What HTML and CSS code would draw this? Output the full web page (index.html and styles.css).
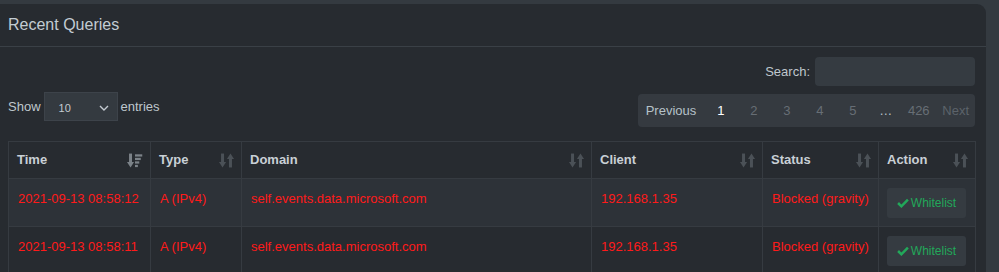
FILE: index.html
```html
<!DOCTYPE html>
<html lang="en">

<head>
    <meta charset="UTF-8">
    <title>Recent Queries</title>
    <link rel="stylesheet" href="styles.css">
</head>

<body>
    <div class="page">
        <div class="card">
            <div class="card-header">
                <h3 class="card-title">Recent Queries</h3>
            </div>
            <div class="card-body">
                <div class="filter-row">
                    <label class="search">Search: <input type="text" class="search-input"></label>
                </div>
                <div class="tools-row">
                    <div class="length">
                        <span>Show</span>
                        <div class="select">
                            <span>10</span>
                            <svg class="chevron" width="10" height="6" viewBox="0 0 10 6"><path d="M1 1l4 4 4-4" fill="none" stroke="#c4cbd1" stroke-width="1.4"/></svg>
                        </div>
                        <span>entries</span>
                    </div>
                    <ul class="pagination">
                        <li class="prev">Previous</li>
                        <li class="current">1</li>
                        <li>2</li>
                        <li>3</li>
                        <li>4</li>
                        <li>5</li>
                        <li class="dots">…</li>
                        <li class="last">426</li>
                        <li class="next">Next</li>
                    </ul>
                </div>

                <table class="queries">
                    <thead>
                        <tr>
                            <th class="col-time">Time
                                <svg class="sort active" width="16" height="15" viewBox="0 0 15 14"><rect x="1.9" y="0.5" width="2.8" height="9"/><path d="M0 8.5h6.6L3.3 13.5z"/><rect x="7.5" y="1.2" width="6.8" height="2.1"/><rect x="7.5" y="4.5" width="5.4" height="2.1"/><rect x="7.5" y="7.8" width="4" height="2.1"/><rect x="7.5" y="11.1" width="2.7" height="2.1"/></svg>
                            </th>
                            <th class="col-type">Type
                                <svg class="sort" width="15" height="15" viewBox="0 0 14 14"><rect x="1.9" y="0.5" width="2.8" height="9"/><path d="M0 8.5h6.6L3.3 13.5z"/><rect x="9.3" y="4.5" width="2.8" height="9"/><path d="M7.4 5.5H14L10.7 0.5z"/></svg>
                            </th>
                            <th class="col-domain">Domain
                                <svg class="sort" width="15" height="15" viewBox="0 0 14 14"><rect x="1.9" y="0.5" width="2.8" height="9"/><path d="M0 8.5h6.6L3.3 13.5z"/><rect x="9.3" y="4.5" width="2.8" height="9"/><path d="M7.4 5.5H14L10.7 0.5z"/></svg>
                            </th>
                            <th class="col-client">Client
                                <svg class="sort" width="15" height="15" viewBox="0 0 14 14"><rect x="1.9" y="0.5" width="2.8" height="9"/><path d="M0 8.5h6.6L3.3 13.5z"/><rect x="9.3" y="4.5" width="2.8" height="9"/><path d="M7.4 5.5H14L10.7 0.5z"/></svg>
                            </th>
                            <th class="col-status">Status
                                <svg class="sort" width="15" height="15" viewBox="0 0 14 14"><rect x="1.9" y="0.5" width="2.8" height="9"/><path d="M0 8.5h6.6L3.3 13.5z"/><rect x="9.3" y="4.5" width="2.8" height="9"/><path d="M7.4 5.5H14L10.7 0.5z"/></svg>
                            </th>
                            <th class="col-action">Action
                                <svg class="sort" width="15" height="15" viewBox="0 0 14 14"><rect x="1.9" y="0.5" width="2.8" height="9"/><path d="M0 8.5h6.6L3.3 13.5z"/><rect x="9.3" y="4.5" width="2.8" height="9"/><path d="M7.4 5.5H14L10.7 0.5z"/></svg>
                            </th>
                        </tr>
                    </thead>
                    <tbody>
                        <tr class="odd">
                            <td>2021-09-13 08:58:12</td>
                            <td>A (IPv4)</td>
                            <td>self.events.data.microsoft.com</td>
                            <td>192.168.1.35</td>
                            <td>Blocked (gravity)</td>
                            <td class="action"><button class="btn-whitelist"><svg width="12" height="10" viewBox="0 0 11 9"><path d="M1 4.5l3 3L10 1.3" fill="none" stroke="#22a85a" stroke-width="2.3"/></svg>Whitelist</button></td>
                        </tr>
                        <tr>
                            <td>2021-09-13 08:58:11</td>
                            <td>A (IPv4)</td>
                            <td>self.events.data.microsoft.com</td>
                            <td>192.168.1.35</td>
                            <td>Blocked (gravity)</td>
                            <td class="action"><button class="btn-whitelist"><svg width="12" height="10" viewBox="0 0 11 9"><path d="M1 4.5l3 3L10 1.3" fill="none" stroke="#22a85a" stroke-width="2.3"/></svg>Whitelist</button></td>
                        </tr>
                    </tbody>
                </table>
            </div>
        </div>
    </div>
</body>

</html>
```

FILE: styles.css
```css
* {
    margin: 0;
    padding: 0;
    box-sizing: border-box;
}

body {
    background-color: #343a40;
    font-family: 'Liberation Sans', Arial, sans-serif;
    font-size: 13px;
    color: #bfc7cd;
    overflow: hidden;
}

.page {
    padding: 4px 13px 0 0;
    height: 272px;
}

.card {
    background-color: #272b30;
    border-radius: 0 9px 0 0;
    height: 268px;
}

.card-header {
    height: 43px;
    padding: 0 8px;
    display: flex;
    align-items: center;
    border-bottom: 1px solid #3a4046;
}

.card-title {
    font-size: 16px;
    font-weight: normal;
    color: #c3ccd3;
    margin-top: -1px;
}

.card-body {
    padding: 10px 11px 0 8px;
}

.filter-row {
    display: flex;
    justify-content: flex-end;
}

.search {
    display: flex;
    align-items: center;
    gap: 5px;
}

.search-input {
    width: 160px;
    height: 29px;
    background-color: #353b41;
    border: none;
    border-radius: 4px;
}

.tools-row {
    display: flex;
    justify-content: space-between;
    align-items: flex-start;
    margin-top: 6px;
}

.length {
    display: flex;
    align-items: center;
    gap: 3px;
    height: 29px;
}

.select {
    width: 74px;
    height: 29px;
    background-color: #343a40;
    border: 1px solid #3d434a;
    display: flex;
    align-items: center;
    justify-content: space-between;
    padding: 2px 8px 0 14px;
    font-size: 11px;
    color: #c4cbd1;
}

.pagination {
    list-style: none;
    display: flex;
    align-items: center;
    height: 33px;
    margin-top: 2px;
    background-color: #353a40;
    border-radius: 4px;
}

.pagination li {
    min-width: 33px;
    padding: 0 6px;
    text-align: center;
    color: #676e75;
}

.pagination .prev {
    padding: 0 8px;
    color: #b6c2c9;
}

.pagination .current {
    color: #ffffff;
}

.pagination .dots {
    color: #b6c2c9;
}

.pagination .last {
    padding: 0 5px;
}

.pagination .next {
    padding: 0 6px 0 7px;
    color: #5c636a;
}

.queries {
    width: 967px;
    margin-top: 14px;
    border-collapse: collapse;
    table-layout: fixed;
}

.queries th,
.queries td {
    border: 1px solid #363b41;
    text-align: left;
    vertical-align: top;
}

.queries th {
    position: relative;
    padding: 9px 8px;
    line-height: 18px;
    font-weight: bold;
    color: #c9d0d6;
}

.queries td {
    padding: 11px 8px 8px 9px;
    line-height: 18px;
    color: #ff1a1a;
    height: 47px;
}

.queries tr.odd td {
    background-color: #2d3238;
}

.col-time { width: 142px; }
.col-type { width: 91px; }
.col-domain { width: 350px; }
.col-client { width: 171px; }
.col-status { width: 116px; }
.col-action { width: 97px; }

.sort {
    position: absolute;
    right: 7px;
    top: 11px;
    fill: #4b5157;
}

.sort.active {
    fill: #7b8288;
}

.queries td.action {
    padding: 9px 8px 8px;
}

.btn-whitelist {
    width: 79px;
    height: 30px;
    display: flex;
    align-items: center;
    justify-content: center;
    gap: 2px;
    background-color: #353b41;
    border: none;
    border-radius: 3px;
    font-family: 'Liberation Sans', Arial, sans-serif;
    font-size: 12px;
    color: #22a85a;
}
```
